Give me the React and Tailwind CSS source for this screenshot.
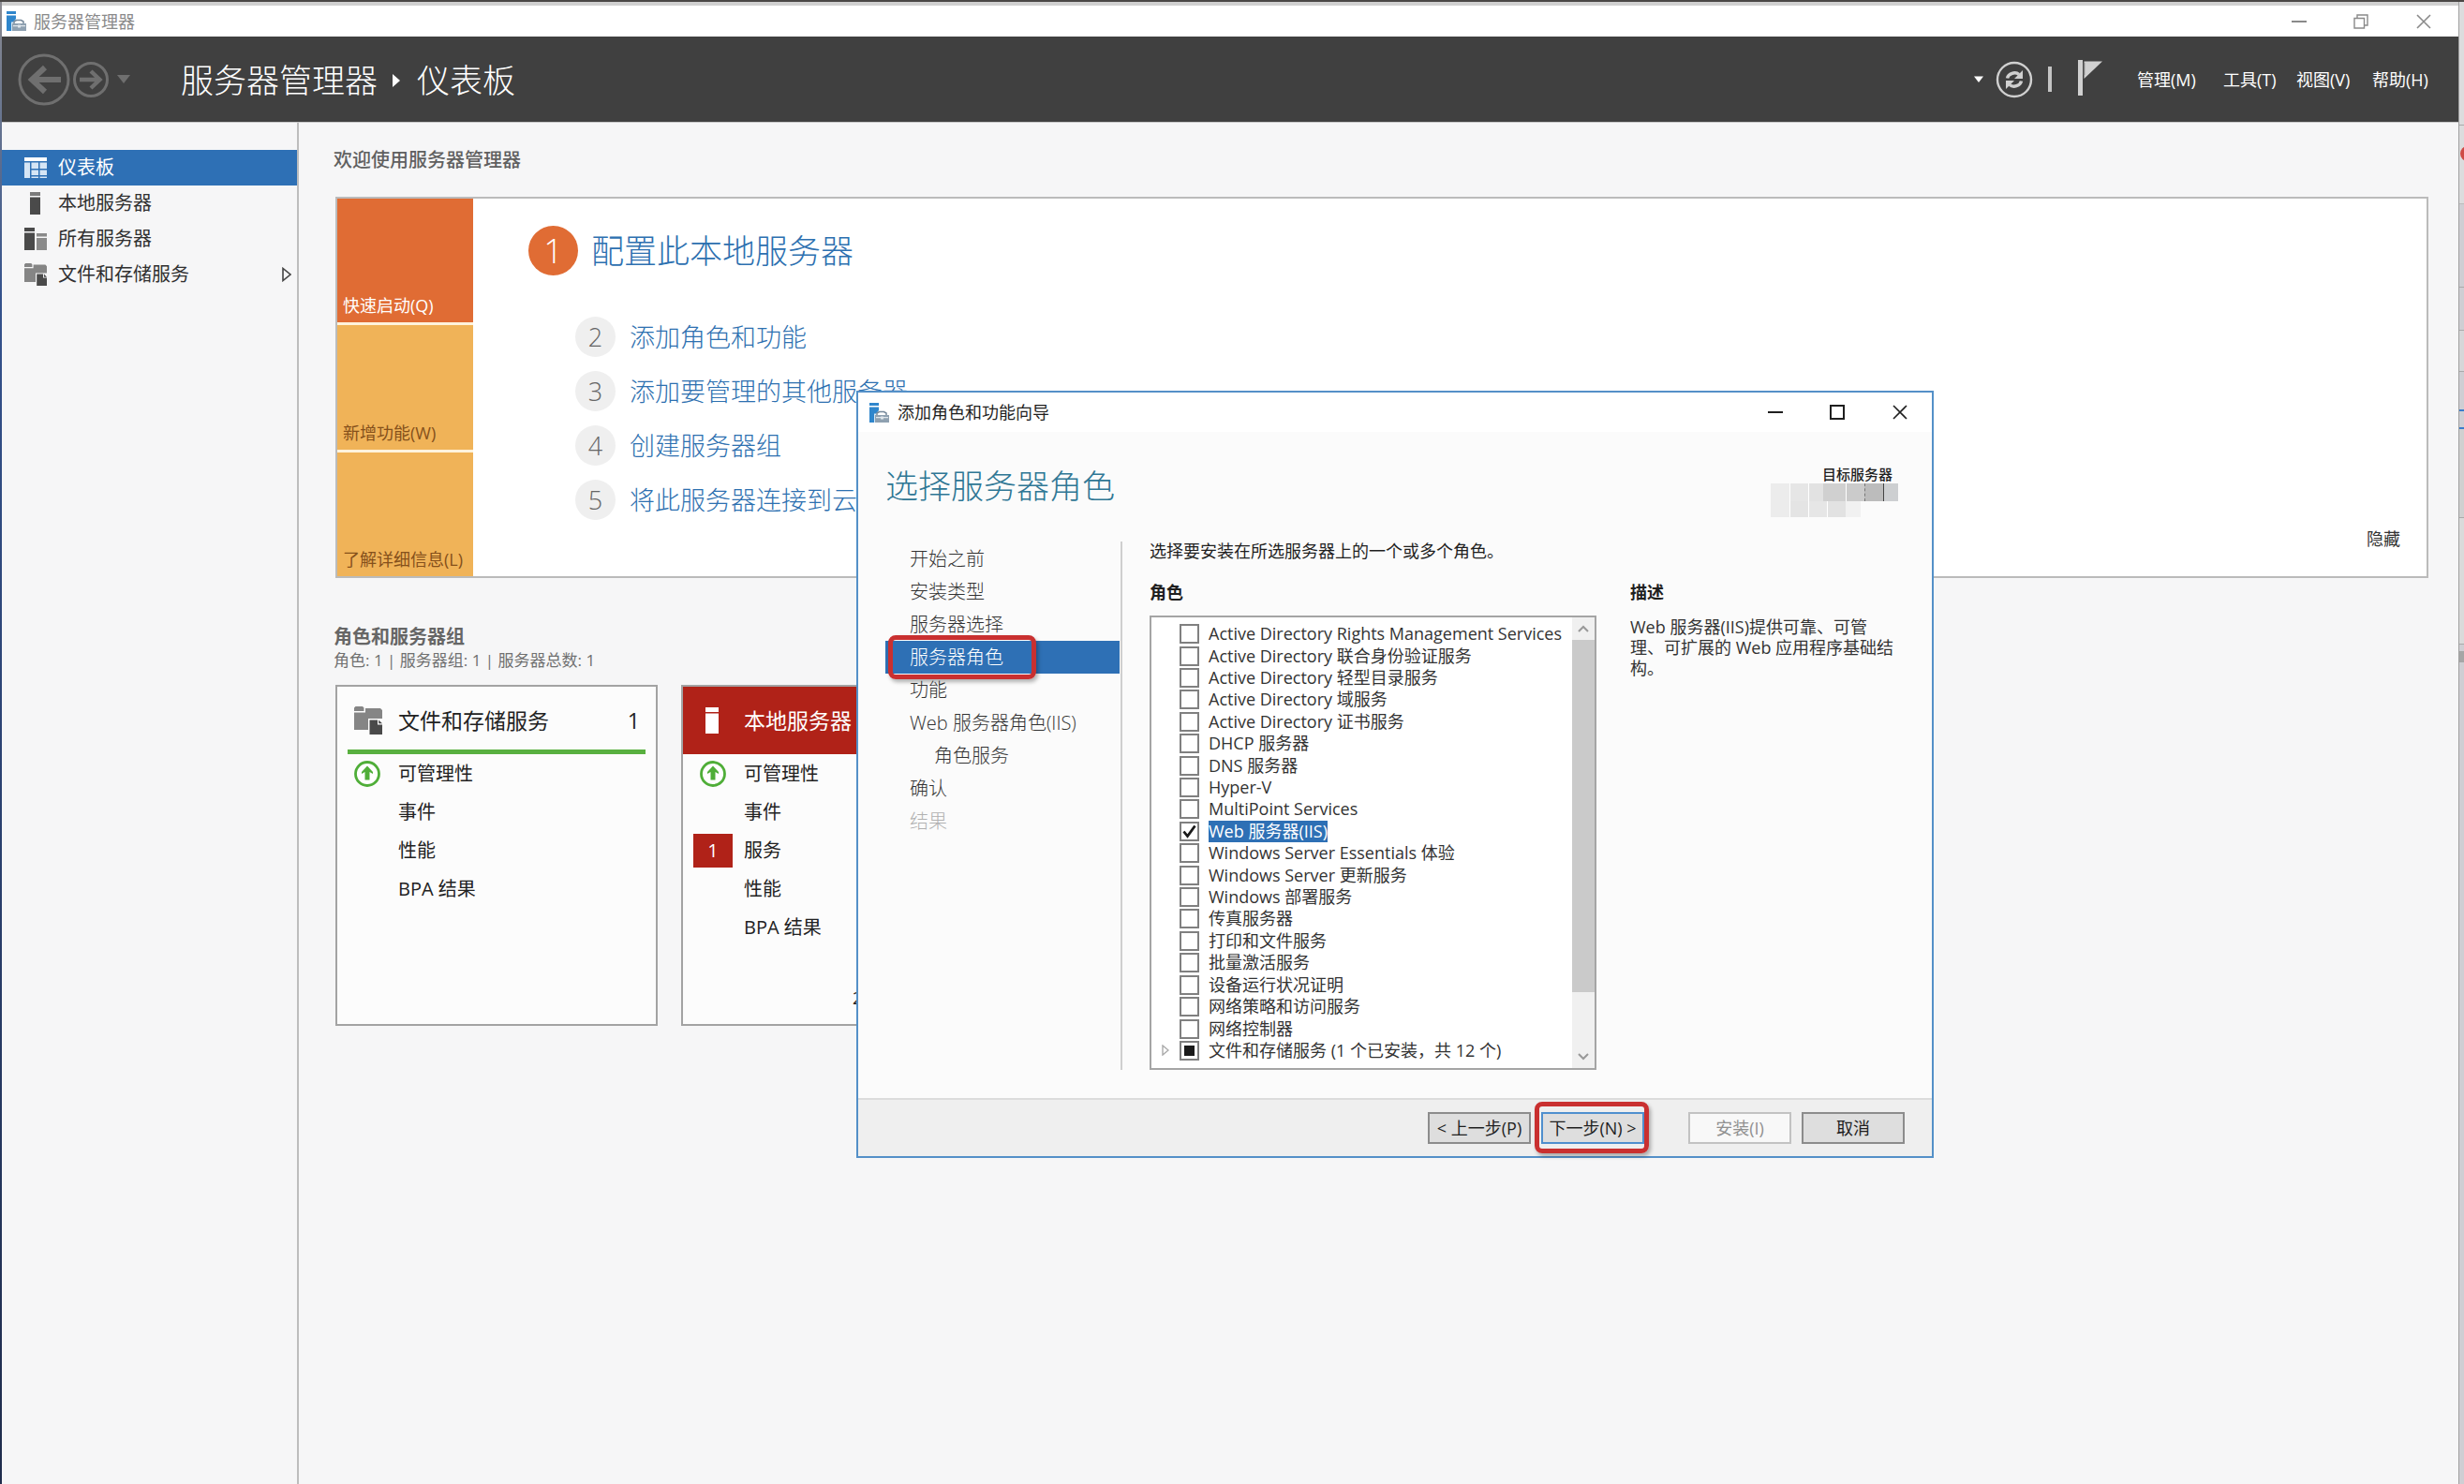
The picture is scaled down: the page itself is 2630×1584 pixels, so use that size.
import { useEffect, useRef, useState } from 'react';

const sidebarItems = [
  { label: '仪表板', icon: DashboardIcon },
  { label: '本地服务器', icon: ServerIcon },
  { label: '所有服务器', icon: ServersIcon },
  { label: '文件和存储服务', icon: StorageIcon, expandable: true }
];

const menuItems = [
  { label: '管理(M)', width: 'w-[92px]' },
  { label: '工具(T)', width: 'w-[78px]' },
  { label: '视图(V)', width: 'w-[81px]' },
  { label: '帮助(H)', width: 'w-[92px]' }
];

const steps = ['添加角色和功能', '添加要管理的其他服务器', '创建服务器组', '将此服务器连接到云服务'];

const wizardPages = [
  { label: '开始之前' },
  { label: '安装类型' },
  { label: '服务器选择' },
  { label: '服务器角色', highlighted: true },
  { label: '功能' },
  { label: 'Web 服务器角色(IIS)' },
  { label: '角色服务', nested: true },
  { label: '确认' },
  { label: '结果', disabled: true }
];

const roles = [
  'Active Directory Rights Management Services',
  'Active Directory 联合身份验证服务',
  'Active Directory 轻型目录服务',
  'Active Directory 域服务',
  'Active Directory 证书服务',
  'DHCP 服务器',
  'DNS 服务器',
  'Hyper-V',
  'MultiPoint Services',
  'Web 服务器(IIS)',
  'Windows Server Essentials 体验',
  'Windows Server 更新服务',
  'Windows 部署服务',
  '传真服务器',
  '打印和文件服务',
  '批量激活服务',
  '设备运行状况证明',
  '网络策略和访问服务',
  '网络控制器',
  '文件和存储服务 (1 个已安装，共 12 个)'
];

const partialRole = roles[roles.length - 1];

function AppIcon() {
  return (
    <svg viewBox="0 0 21 21" className="h-[21px] w-[21px] shrink-0" aria-hidden="true">
      <path fill="#2f86cc" d="M0 0h10v3H0zM0 4.500h10v3.500L7 12v9H0z" />
      <path fill="#fff" d="M5 11.500h16V21H5z" opacity=".8" />
      <path fill="none" stroke="#76899b" strokeWidth="1.500" d="M8 13.500V11l2.500-1.500h5L18 11v2.500" />
      <path fill="#8fa1b1" d="M6 13h15v8H6z" />
      <path fill="#dfe6ec" d="M7 15h13v1.200H7zM12 14.500h3v3h-3z" />
    </svg>
  );
}

function DashboardIcon() {
  return (
    <svg viewBox="0 0 24 22" className="h-[22px] w-6" aria-hidden="true">
      <path fill="#fff" d="M0 0h24v4H0z" />
      <path fill="#d5e5f5" d="M0 5.500h6V22H0zM7.500 5.500h7.500V12H7.500zM16.500 5.500H24V12h-7.500zM7.500 13.500h7.500V19H7.500zM16.500 13.500H24V19h-7.500zM7.500 20.500h7.500V22H7.500zM16.500 20.500H24V22h-7.500z" />
    </svg>
  );
}

function ServerIcon() {
  return (
    <svg viewBox="0 0 24 24" className="h-6 w-6" aria-hidden="true">
      <path fill="#7a7a7a" d="M6 0h11v4H6z" />
      <path fill="#4a4a4a" d="M6 5.500h11V24H6z" />
    </svg>
  );
}

function ServersIcon() {
  return (
    <svg viewBox="0 0 24 24" className="h-6 w-6" aria-hidden="true">
      <path fill="#4a4a4a" d="M0 0h11v4H0zM0 5.500h11V24H0z" />
      <path fill="#8a8a8a" d="M13 6h11v3.500H13zM13 11h11v13H13z" />
    </svg>
  );
}

function StorageIcon({ className = 'h-6 w-6' }) {
  return (
    <svg viewBox="0 0 30 30" className={className} aria-hidden="true">
      <path fill="#858585" d="M0 1.500 1.500 0H9l1.500 1.500V5H0zM12 2h16l2 2v9H15v12H0V6.500h12z" />
      <path fill="#4a4a4a" d="M16.500 14.500H25v5h5V30H16.500z" />
      <path fill="#4a4a4a" d="M26.200 14.500 30 18.300h-3.800z" />
    </svg>
  );
}

function UpIcon() {
  return (
    <svg viewBox="0 0 28 28" className="h-7 w-7" aria-label="联机">
      <circle cx="14" cy="14" r="12.500" fill="#fff" stroke="#4fae38" strokeWidth="2.800" />
      <path fill="#4fae38" d="m14 5.500 6 6.500v2l-3.500-2v8.500h-5V12L8 14v-2z" />
    </svg>
  );
}

function WindowControls({ maximized }) {
  return (
    <div className="ml-auto flex items-center">
      <button type="button" aria-label="最小化" className="flex h-8 w-[66px] items-center justify-center">
        <svg viewBox="0 0 16 16" className="h-4 w-4"><path d="M0 8h16" stroke="currentColor" strokeWidth="2" /></svg>
      </button>
      <button type="button" aria-label={maximized ? '还原' : '最大化'} className="flex h-8 w-[66px] items-center justify-center">
        <svg viewBox="0 0 16 16" className="h-4 w-4" fill="none" stroke="currentColor" strokeWidth={maximized ? 1.4 : 2}>
          {maximized ? <path d="M1 4.500h10.500V15H1zM4 4.500V1h11v11h-3.500" /> : <path d="M1 1h14v14H1z" />}
        </svg>
      </button>
      <button type="button" aria-label="关闭" className="flex h-8 w-[68px] items-center justify-center">
        <svg viewBox="0 0 16 16" className="h-4 w-4"><path d="m1 1 14 14M15 1 1 15" stroke="currentColor" strokeWidth="1.600" /></svg>
      </button>
    </div>
  );
}

function HeaderBar() {
  return (
    <header className="flex h-[91px] items-center bg-[#404040] text-white">
      <button type="button" aria-label="后退" className="ml-[17px] text-[#6f6f6f]">
        <svg viewBox="0 0 56 56" className="h-14 w-14" fill="none" stroke="currentColor">
          <circle cx="28" cy="28" r="26" strokeWidth="3" />
          <path d="M46 28H15M29 15 15 28l14 13" strokeWidth="6" />
        </svg>
      </button>
      <button type="button" aria-label="前进" className="ml-[2px] text-[#6f6f6f]">
        <svg viewBox="0 0 40 40" className="h-10 w-10" fill="none" stroke="currentColor">
          <circle cx="20" cy="20" r="17.500" strokeWidth="3" />
          <path d="M8 20h21M20 11l9.500 9L20 29" strokeWidth="4.400" />
        </svg>
      </button>
      <button type="button" aria-label="历史记录" className="ml-2 text-[#6f6f6f]">
        <svg viewBox="0 0 14 9" className="h-[9px] w-[14px]"><path d="M0 0h14L7 9z" fill="currentColor" /></svg>
      </button>
      <h1 className="ml-[54px] flex items-center pt-[2px] text-[35px] leading-[44px] font-light">
        服务器管理器
        <svg viewBox="0 0 8 14" className="mr-[18px] ml-4 h-[14px] w-2" aria-hidden="true"><path d="M0 0v14l8-7z" fill="#fff" /></svg>
        仪表板
      </h1>

      <div className="ml-auto flex items-center">
        <button type="button" aria-label="选项" className="mr-3">
          <svg viewBox="0 0 12 8" className="h-2 w-3"><path d="M1 0.500h10L6 7z" fill="#fff" /></svg>
        </button>
        <button type="button" aria-label="刷新" className="text-[#d0d0d0]">
          <svg viewBox="0 0 40 40" className="h-10 w-10" fill="none" stroke="currentColor">
            <circle cx="20" cy="20" r="18" strokeWidth="2.400" />
            <path d="M12.500 18.500c1-5 8.500-7.500 12.500-4M27.500 21.500c-1 5-8.500 7.500-12.500 4" strokeWidth="3.400" />
            <path d="M29 10v9h-9zM11 30v-9h9z" fill="currentColor" stroke="none" />
          </svg>
        </button>
        <span className="ml-4 h-[27px] w-1 bg-[#c4c4c4]" />
        <button type="button" aria-label="通知" className="-mt-1 mr-[37px] ml-7 text-[#d0d0d0]">
          <svg viewBox="0 0 26 38" className="h-[38px] w-[26px]">
            <path d="M0 0h5v38H0zM6.500 1.500H26L6.500 20z" fill="currentColor" />
            <path d="M6.500 3v13" stroke="#777" strokeWidth="1.500" />
          </svg>
        </button>
        {menuItems.map((item) => (
          <button key={item.label} type="button" className={`${item.width} text-left text-[18px] leading-6`}>
            {item.label}
          </button>
        ))}
      </div>
    </header>
  );
}

function Sidebar() {
  return (
    <nav className="w-[317px] shrink-0 border-r-2 border-[#bdbdbd] bg-[#f6f6f7] pt-[29px]">
      {sidebarItems.map((item, index) => {
        const Icon = item.icon;
        return (
          <a
            key={item.label}
            href="#"
            className={[
              'flex h-[38px] items-center pr-[6px] pl-6 text-[20px] leading-7',
              index === 0 ? 'bg-[#2e70b5] text-white' : 'text-[#303030]'
            ].join(' ')}
          >
            <Icon />
            <span className="ml-3">{item.label}</span>
            {item.expandable ? (
              <svg viewBox="0 0 10 16" className="ml-auto h-4 w-[10px]" aria-hidden="true">
                <path d="M1 1.500v13L9 8z" fill="none" stroke="#444" strokeWidth="1.600" />
              </svg>
            ) : null}
          </a>
        );
      })}
    </nav>
  );
}

function WelcomePanel() {
  return (
    <section className="flex h-[407px] border-2 border-[#bbb] bg-white">
      <div className="flex w-[145px] shrink-0 flex-col gap-[3px] bg-[#fff3dc] text-[18px] leading-6">
        <button type="button" className="flex flex-1 items-end bg-[#e06c34] px-[6px] pb-[6px] text-white">快速启动(Q)</button>
        <button type="button" className="flex flex-1 items-end bg-[#f0b358] px-[6px] pb-[6px] text-[#85501b]">新增功能(W)</button>
        <button type="button" className="flex flex-1 items-end bg-[#f0b358] px-[6px] pb-[6px] text-[#85501b]">了解详细信息(L)</button>
      </div>
      <div className="pt-[29px] pl-[59px] font-light">
        <a href="#" className="flex items-center gap-[14px] text-[35px] leading-[52px] text-[#2d70b0]">
          <span className="flex h-[53px] w-[53px] items-center justify-center rounded-full bg-[#e06c34] text-[36px] text-white">1</span>
          配置此本地服务器
        </a>
        <ol className="mt-[44px] ml-[50px] flex flex-col gap-[15px]">
          {steps.map((step, index) => (
            <li key={step}>
              <a href="#" className="flex items-center gap-[15px] text-[27px] leading-[43px] text-[#2d70b0]">
                <span className="flex h-[43px] w-[43px] items-center justify-center rounded-full bg-[#efefef] text-[#666]">{index + 2}</span>
                {step}
              </a>
            </li>
          ))}
        </ol>
      </div>
      <button type="button" className="mt-auto mr-7 mb-7 ml-auto text-[18px] leading-6 text-[#333]">隐藏</button>
    </section>
  );
}

function GroupRow({ label, children }) {
  return (
    <li className="flex h-[41px] items-center">
      <span className="flex w-[42px] justify-center">{children}</span>
      <a href="#" className="ml-3">{label}</a>
    </li>
  );
}

function RoleGroups() {
  return (
    <div className="mt-[14px] flex gap-[25px] text-[#222]">
      <article className="h-[364px] w-[344px] border-2 border-[#a3a3a3] bg-[#fcfcfc] px-[11px]">
        <h3 className="flex h-[72px] items-center border-b-[5px] border-[#59b040] pt-1 pr-[6px] pl-[7px] text-[23px] leading-8">
          <StorageIcon className="mr-[17px] h-[30px] w-[30px]" />
          文件和存储服务
          <span className="ml-auto">1</span>
        </h3>
        <ul className="text-[20px] leading-7">
          <GroupRow label="可管理性"><UpIcon /></GroupRow>
          <GroupRow label="事件" />
          <GroupRow label="性能" />
          <GroupRow label="BPA 结果" />
        </ul>
      </article>
      <article className="flex h-[364px] w-[344px] flex-col border-2 border-[#a3a3a3] bg-[#fcfcfc]">
        <h3 className="flex h-[72px] shrink-0 items-center bg-[#b02218] pl-6 text-[23px] leading-8 text-white">
          <svg viewBox="0 0 14 28" className="mr-[27px] h-7 w-[14px]" aria-hidden="true">
            <path fill="#fff" d="M0 0h14v5H0zM0 6.500h14V28H0z" />
          </svg>
          本地服务器
        </h3>
        <ul className="px-[11px] text-[20px] leading-7">
          <GroupRow label="可管理性"><UpIcon /></GroupRow>
          <GroupRow label="事件" />
          <GroupRow label="服务">
            <span className="h-9 w-[42px] bg-[#b02218] text-center leading-9 text-white">1</span>
          </GroupRow>
          <GroupRow label="性能" />
          <GroupRow label="BPA 结果" />
        </ul>
        <span className="mt-auto mb-4 ml-[181px] text-[18px] leading-6">2</span>
      </article>
    </div>
  );
}

function RoleRow({ label, checked, selected, onToggle }) {
  const inputRef = useRef(null);
  const partial = label === partialRole;

  useEffect(() => {
    inputRef.current.indeterminate = partial;
  }, [partial]);

  return (
    <li className="flex flex-1 items-center">
      <span className="flex w-[30px] justify-center">
        {partial ? (
          <button type="button" aria-label="展开">
            <svg viewBox="0 0 8 12" className="h-3 w-2"><path d="M1 1v10l6-5z" fill="none" stroke="#aaa" strokeWidth="1.400" /></svg>
          </button>
        ) : null}
      </span>
      <label className="flex items-center gap-[10px]">
        <span className="relative h-[21px] w-[21px]">
          <input
            ref={inputRef}
            type="checkbox"
            checked={checked}
            onChange={onToggle}
            className="block h-[21px] w-[21px] appearance-none border-2 border-[#808080] bg-white"
          />
          {checked || partial ? (
            <svg viewBox="0 0 21 21" className="pointer-events-none absolute inset-0" aria-hidden="true">
              {partial ? <path d="M5 5h11v11H5z" fill="#1a1a1a" /> : <path d="m4.500 10.500 4 5 8-11" fill="none" stroke="#1a1a1a" strokeWidth="2.800" />}
            </svg>
          ) : null}
        </span>
        <span className={selected ? 'bg-[#2e70b5] text-white' : ''}>{label}</span>
      </label>
    </li>
  );
}

function RoleList() {
  const [checkedRoles, setCheckedRoles] = useState(['Web 服务器(IIS)']);

  const toggleRole = (role) =>
    setCheckedRoles((current) => (current.includes(role) ? current.filter((item) => item !== role) : [...current, role]));

  return (
    <div className="flex h-[485px] w-[477px] border-2 border-[#a5a5a5] bg-white">
      <ul className="flex min-w-0 flex-1 flex-col pt-[6px] pb-[7px] text-[18px] leading-[23px] whitespace-nowrap text-[#333]">
        {roles.map((role) => (
          <RoleRow
            key={role}
            label={role}
            checked={checkedRoles.includes(role)}
            selected={role === 'Web 服务器(IIS)'}
            onToggle={() => toggleRole(role)}
          />
        ))}
      </ul>
      <div className="flex w-6 flex-col bg-[#f0f0f0] text-[#999]">
        <button type="button" aria-label="向上滚动" className="flex h-6 items-center justify-center">
          <svg viewBox="0 0 12 8" className="h-2 w-3"><path d="m1 7 5-5 5 5" fill="none" stroke="currentColor" strokeWidth="2" /></svg>
        </button>
        <div className="h-[376px] bg-[#cacaca]" />
        <button type="button" aria-label="向下滚动" className="mt-auto flex h-6 items-center justify-center">
          <svg viewBox="0 0 12 8" className="h-2 w-3"><path d="m1 1 5 5 5-5" fill="none" stroke="currentColor" strokeWidth="2" /></svg>
        </button>
      </div>
    </div>
  );
}

function MaskedServerName() {
  return (
    <div className="w-[136px]" aria-hidden="true">
      <div className="flex h-[19px]">
        <span className="w-5 bg-[#ececec]" />
        <span className="w-5 border-l border-white bg-[#e6e6e6]" />
        <span className="w-4 border-l border-white bg-[#e2e2e2]" />
        <span className="w-6 bg-[#d0d0d0]" />
        <span className="w-5 border-l border-white bg-[#cbcbcb]" />
        <span className="w-5 border-l border-dashed border-[#777] bg-[#bcbcbc]" />
        <span className="flex-1 border-l border-[#444] bg-[#cdcfd1]" />
      </div>
      <div className="flex h-[17px]">
        <span className="w-5 bg-[#ececec]" />
        <span className="w-5 border-l border-white bg-[#e4e4e4]" />
        <span className="w-5 border-l border-white bg-[#e6e6e6]" />
        <span className="w-5 border-l border-white bg-[#e2e2e2]" />
        <span className="w-4 bg-[#f1f1f1]" />
      </div>
    </div>
  );
}

function WizardNav() {
  return (
    <ol className="w-[250px] pt-[1px] text-[20px] leading-[35px] font-light text-[#333]">
      {wizardPages.map((page) => (
        <li
          key={page.label}
          className={[
            'relative h-[35px]',
            page.nested ? 'pl-[52px]' : 'pl-[26px]',
            page.highlighted ? 'bg-[#2e70b5] text-white' : '',
            page.disabled ? 'text-[#b0b0b0]' : ''
          ].join(' ')}
        >
          {page.label}
          {page.highlighted ? (
            <span className="absolute -top-[6px] left-[3px] h-[47px] w-[158px] rounded-lg border-[5px] border-[#c93030] shadow-[2px_3px_4px_rgba(0,0,0,0.3)]" />
          ) : null}
        </li>
      ))}
    </ol>
  );
}

function RolesWizard() {
  return (
    <div
      role="dialog"
      aria-label="添加角色和功能向导"
      className="absolute top-[417px] left-[914px] w-[1150px] border-2 border-[#5490c8] bg-[#fbfbfb] text-[#1f1f1f]"
    >
      <div className="flex h-[42px] items-center bg-white pl-3 text-[18px] leading-6">
        <AppIcon />
        <span className="ml-[9px]">添加角色和功能向导</span>
        <WindowControls />
      </div>

      <div className="flex h-[117px] items-start justify-between pr-9 pl-[29px]">
        <h2 className="mt-[33px] text-[35px] leading-[50px] font-light text-[#2f7795]">选择服务器角色</h2>
        <div className="mt-9 text-right">
          <div className="pr-[6px] text-[15px] leading-[19px] font-medium">目标服务器</div>
          <MaskedServerName />
        </div>
      </div>

      <div className="flex pl-[29px] leading-[22px]">
        <WizardNav />
        <div className="ml-px h-[564px] w-[2px] bg-[#cfcfcf]" />
        <div className="ml-[29px] text-[18px]">
          <p className="leading-5">选择要安装在所选服务器上的一个或多个角色。</p>
          <h3 className="mt-6 mb-[15px] leading-5 font-bold">角色</h3>
          <RoleList />
        </div>
        <div className="mt-[44px] ml-9 w-[284px] text-[18px]">
          <h3 className="leading-5 font-bold">描述</h3>
          <p className="mt-4 leading-[22px] text-[#333]">Web 服务器(IIS)提供可靠、可管理、可扩展的 Web 应用程序基础结构。</p>
        </div>
      </div>

      <div className="mt-[30px] flex h-[62px] items-center justify-end gap-[11px] border-t-2 border-[#dcdcdc] bg-[#efefef] pr-[29px] text-[18px]">
        <button type="button" className="h-[34px] w-[110px] border-2 border-[#8c8c8c] bg-[#dedede]">&lt; 上一步(P)</button>
        <div className="relative">
          <button type="button" className="h-[34px] w-[110px] border-2 border-[#4f8fce] bg-[#dedede]">下一步(N) &gt;</button>
          <span className="pointer-events-none absolute -top-[11px] -left-[7px] h-[55px] w-[122px] rounded-lg border-[5px] border-[#c93030] shadow-[2px_3px_4px_rgba(0,0,0,0.3)]" />
        </div>
        <button type="button" disabled className="ml-9 h-[34px] w-[110px] border-2 border-[#c2c2c2] bg-[#f8f8f8] text-[#909090]">安装(I)</button>
        <button type="button" className="h-[34px] w-[110px] border-2 border-[#8c8c8c] bg-[#dedede]">取消</button>
      </div>
    </div>
  );
}

// Sliver of the window that lies behind, right of the server manager
function BackgroundEdge() {
  return (
    <div className="flex w-[6px] flex-col overflow-hidden border-l border-[#a0a0a0] bg-[#cfced3]">
      <div className="h-[132px] border-b border-[#aaa] bg-[#dcdcdd]" />
      <div className="flex h-[84px] flex-col justify-center border-b border-[#bbb] bg-[#dcdcdd]">
        <div className="-mt-6 ml-px h-4 w-4 rounded-full bg-[#cf4a44]" />
      </div>
      <div className="h-[89px] border-b border-[#aaa]" />
      <div className="h-[46px] border-b border-[#aaa]" />
      <div className="h-[44px] border-b border-[#aaa] bg-[#d6d6d8]" />
      <div className="h-[42px] border-b-2 border-[#3b7dcc]" />
      <div className="h-[19px] border-b-2 border-[#3b7dcc]" />
      <div className="h-[95px] border-b border-[#aaa] bg-[#d0d0d0]" />
      <div className="h-[135px] border-b border-[#aaa] bg-[#dadada]" />
      <div className="mt-[7px] h-3 bg-[#a6a6a6]" />
    </div>
  );
}

export default function App() {
  return (
    <div className="relative flex min-h-screen flex-col overflow-hidden bg-[#d9d9db] font-['Open_Sans','Noto_Sans_CJK_SC',sans-serif]">
      <div className="h-[2px] bg-[#4a4745]" />
      <div className="flex flex-1">
        <div className="w-[2px] bg-linear-to-b from-[#8a8a90] via-[#34528c] via-20% to-[#1f2c4c]" />
        <div className="flex min-w-0 flex-1 flex-col border-t-4 border-[#d0d0d0] bg-[#f6f6f7]">
          <div className="flex h-[33px] items-center bg-white pr-[3px] pl-[5px] text-[18px] leading-6 text-[#8a8a8a]">
            <AppIcon />
            <span className="ml-2">服务器管理器</span>
            <WindowControls maximized />
          </div>
          <HeaderBar />
          <div className="flex flex-1 border-t border-[#c8c8c8]">
            <Sidebar />
            <main className="min-w-0 flex-1 pt-[26px] pr-8 pl-[39px]">
              <h2 className="-ml-[2px] text-[20px] leading-7 font-medium text-[#606060]">欢迎使用服务器管理器</h2>
              <div className="mt-[25px]">
                <WelcomePanel />
              </div>
              <div className="mt-[50px] -ml-[2px]">
                <h2 className="text-[20px] leading-[26px] font-bold text-[#666]">角色和服务器组</h2>
                <p className="text-[17px] leading-6 text-[#707070]">角色: 1 | 服务器组: 1 | 服务器总数: 1</p>
              </div>
              <RoleGroups />
            </main>
          </div>
        </div>
        <BackgroundEdge />
      </div>
      <RolesWizard />
    </div>
  );
}
